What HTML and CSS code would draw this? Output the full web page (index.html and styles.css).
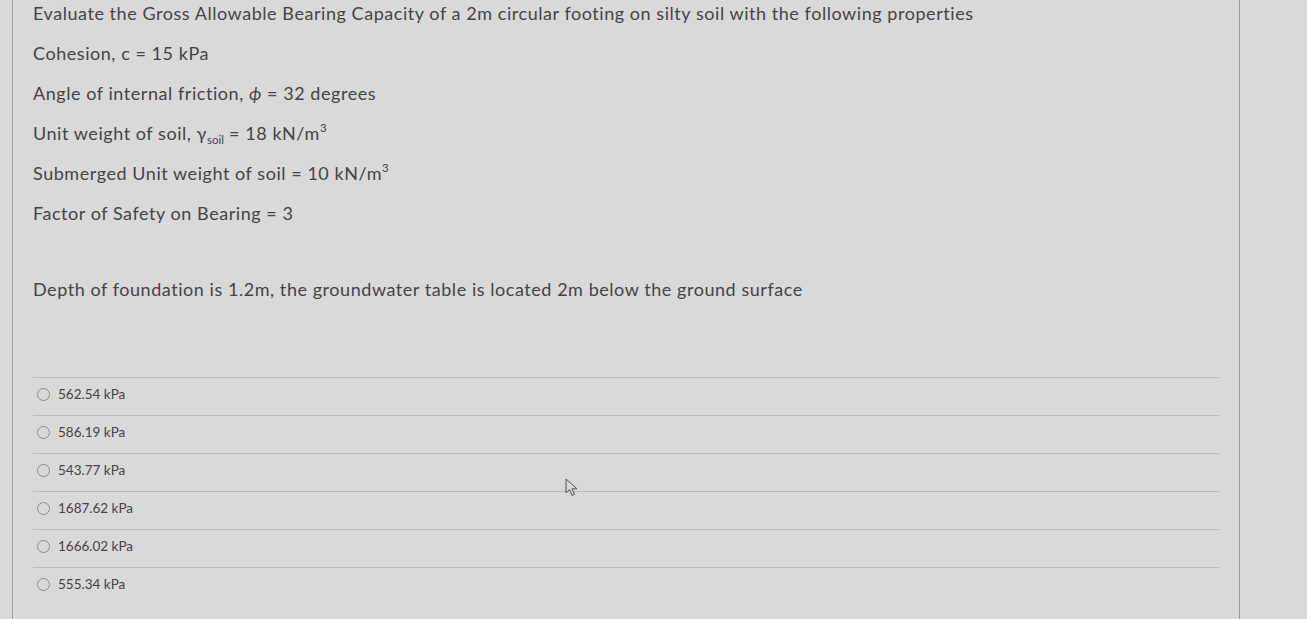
FILE: index.html
```html
<!DOCTYPE html>
<html>
<head>
<meta charset="utf-8">
<link rel="stylesheet" href="styles.css">
</head>
<body>
<div class="panel">
  <div class="question">
    <p class="line">Evaluate the Gross Allowable Bearing Capacity of a 2m circular footing on silty soil with the following properties</p>
    <p class="line">Cohesion, c = 15 kPa</p>
    <p class="line">Angle of internal friction, <span class="phi">ϕ</span> = 32 degrees</p>
    <p class="line">Unit weight of soil, γ<sub>soil</sub> = 18 kN/m<sup>3</sup></p>
    <p class="line">Submerged Unit weight of soil = 10 kN/m<sup>3</sup></p>
    <p class="line">Factor of Safety on Bearing = 3</p>
    <p class="line depth">Depth of foundation is 1.2m, the groundwater table is located 2m below the ground surface</p>
  </div>
  <ul class="answers">
    <li class="answer"><span class="radio"></span><span class="label">562.54 kPa</span></li>
    <li class="answer"><span class="radio"></span><span class="label">586.19 kPa</span></li>
    <li class="answer"><span class="radio"></span><span class="label">543.77 kPa</span></li>
    <li class="answer"><span class="radio"></span><span class="label">1687.62 kPa</span></li>
    <li class="answer"><span class="radio"></span><span class="label">1666.02 kPa</span></li>
    <li class="answer"><span class="radio"></span><span class="label">555.34 kPa</span></li>
  </ul>
</div>
<svg class="cursor" width="14" height="20" viewBox="0 0 14 20">
  <path d="M1 1 L1 15 L4.5 11.5 L7 17.5 L9.5 16.5 L7 10.8 L12 10.8 Z" fill="#d9d9d9" stroke="#555" stroke-width="1" stroke-linejoin="round"/>
</svg>
</body>
</html>
```
FILE: styles.css
```css
html, body {
  margin: 0;
  padding: 0;
  background: #d9d9d9;
  height: 100%;
  overflow: hidden;
}
body {
  font-family: Lato, "Open Sans", sans-serif;
  color: #444444;
  position: relative;
}
.panel {
  margin-left: 12px;
  width: 1226px;
  height: 619px;
  border-left: 1px solid #a3a3a3;
  border-right: 1px solid #9a9a9a;
  box-sizing: content-box;
}
.question {
  padding: 1px 0 0 20px;
}
.line {
  margin: 0 0 16px 0;
  font-size: 18px;
  letter-spacing: 0.55px;
  line-height: 24px;
  white-space: nowrap;
}
.line.depth {
  margin-top: 52px;
  margin-bottom: 0;
}
.phi {
  font-style: italic;
}
sub {
  font-size: 11.5px;
  letter-spacing: 0;
  vertical-align: -4px;
  line-height: 0;
}
sup {
  font-size: 11.5px;
  letter-spacing: 0;
  vertical-align: 8px;
  line-height: 0;
}
.answers {
  list-style: none;
  margin: 76px 20px 0 20px;
  padding: 0;
}
.answer {
  display: flex;
  align-items: flex-start;
  border-top: 1px solid #bcbcbc;
  padding: 8px 0 0 4px;
  box-sizing: border-box;
  height: 38px;
  gap: 8px;
}
.radio {
  width: 11px;
  height: 11px;
  margin-top: 2px;
  border: 1px solid #8a8a8a;
  border-radius: 50%;
  box-sizing: content-box;
}
.label {
  font-size: 13.5px;
  line-height: 16px;
  color: #444;
}
.cursor {
  position: absolute;
  left: 565px;
  top: 478px;
}
```
